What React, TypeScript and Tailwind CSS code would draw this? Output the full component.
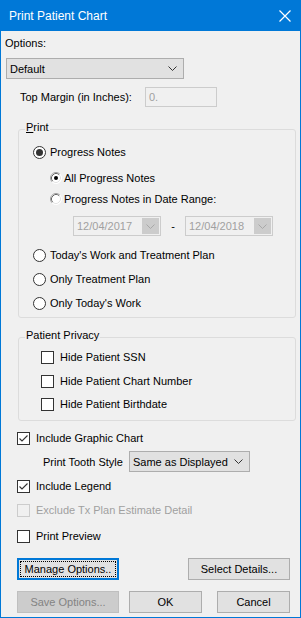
import React from "react";

function Radio({ checked }: { checked?: boolean }) {
  return (
    <svg width="13" height="13" viewBox="0 0 13 13" className="shrink-0">
      <circle cx="6.5" cy="6.5" r="6" fill="#ffffff" stroke="#333333" strokeWidth="1" />
      {checked && <circle cx="6.5" cy="6.5" r="3.5" fill="#333333" />}
    </svg>
  );
}

function ClassicRadio({ checked }: { checked?: boolean }) {
  return (
    <svg width="12" height="12" viewBox="0 0 12 12" className="shrink-0">
      <circle cx="6" cy="6" r="5.5" fill="#ffffff" />
      <path d="M2.11 9.89 A5.5 5.5 0 0 1 9.89 2.11" fill="none" stroke="#a0a0a0" strokeWidth="1" />
      <path d="M2.82 9.18 A4.5 4.5 0 0 1 9.18 2.82" fill="none" stroke="#696969" strokeWidth="1" />
      <path d="M9.89 2.11 A5.5 5.5 0 0 1 2.11 9.89" fill="none" stroke="#ffffff" strokeWidth="1" />
      <path d="M9.18 2.82 A4.5 4.5 0 0 1 2.82 9.18" fill="none" stroke="#e3e3e3" strokeWidth="1" />
      {checked && <circle cx="6" cy="6" r="2" fill="#000000" />}
    </svg>
  );
}

function Check({ checked, disabled }: { checked?: boolean; disabled?: boolean }) {
  return (
    <svg width="13" height="13" viewBox="0 0 13 13" className="shrink-0">
      <rect
        x="0.5"
        y="0.5"
        width="12"
        height="12"
        fill={disabled ? "#f0f0f0" : "#ffffff"}
        stroke={disabled ? "#cccccc" : "#333333"}
        strokeWidth="1"
      />
      {checked && (
        <path d="M2.5 6.5 L5 9 L10.5 3.5" fill="none" stroke="#333333" strokeWidth="1.1" />
      )}
    </svg>
  );
}

function Chevron({ color = "#333333" }: { color?: string }) {
  return (
    <svg width="9" height="5" viewBox="0 0 9 5" className="shrink-0">
      <path d="M0.5 0.5 L4.5 4.5 L8.5 0.5" fill="none" stroke={color} strokeWidth="1" />
    </svg>
  );
}

function DateCombo({ value }: { value: string }) {
  return (
    <div className="w-[88px] h-[20px] border border-[#cccccc] bg-[#f0f0f0] flex items-center justify-between">
      <span className="pl-[3px] text-[#a0a0a0]">{value}</span>
      <div className="w-[17px] h-[16px] mr-[1px] bg-[#cccccc] flex items-center justify-center">
        <Chevron color="#a8a8a8" />
      </div>
    </div>
  );
}

function Button({
  label,
  w,
  focused,
  disabled,
}: {
  label: string;
  w: string;
  focused?: boolean;
  disabled?: boolean;
}) {
  if (focused) {
    return (
      <div className={`${w} h-[22px] border-2 border-[#0078d7] bg-[#e1e1e1] p-[1px]`}>
        <div className="w-full h-full border border-dotted border-black flex items-center justify-center text-black">
          {label}
        </div>
      </div>
    );
  }
  return (
    <div
      className={`${w} h-[22px] border flex items-center justify-center ${
        disabled ? "border-[#bfbfbf] bg-[#cccccc] text-[#838383]" : "border-[#adadad] bg-[#e1e1e1] text-black"
      }`}
    >
      {label}
    </div>
  );
}

export default function App() {
  return (
    <div className="w-[301px] h-[618px] border border-[#0078d7] bg-[#f0f0f0] flex flex-col font-['Liberation_Sans',Arial,sans-serif] text-[11px] leading-[16px] text-black overflow-hidden whitespace-nowrap">
      {/* Title bar */}
      <div className="h-[30px] shrink-0 bg-[#0078d7] flex items-center justify-between pl-[8px] pr-[9px]">
        <span className="text-white text-[12px]">Print Patient Chart</span>
        <svg width="12" height="12" viewBox="0 0 12 12">
          <path d="M0.5 0.5 L11.5 11.5 M11.5 0.5 L0.5 11.5" stroke="#ffffff" strokeWidth="1.2" />
        </svg>
      </div>

      {/* Options */}
      <div className="mt-[4px] pl-[4px] h-[16px]">Options:</div>
      <div className="mt-[7px] ml-[5px] w-[178px] h-[21px] border border-[#adadad] bg-[#e1e1e1] flex items-center justify-between pl-[3px] pr-[6px]">
        <span>Default</span>
        <Chevron />
      </div>

      {/* Top margin */}
      <div className="mt-[8px] ml-[19px] flex items-center h-[20px]">
        <span className="w-[125px]">Top Margin (in Inches):</span>
        <div className="w-[72px] h-[20px] border border-[#cccccc] bg-[#f0f0f0] flex items-center pl-[3px] text-[#a0a0a0]">
          0.
        </div>
      </div>

      {/* Print group */}
      <div className="relative mt-[22px] ml-[17px] w-[278px] border border-[#dcdcdc] rounded-[3px] pt-[12px] pb-[4px]">
        <span className="absolute top-[-11px] left-[6px] px-[1px] bg-[#f0f0f0]">
          <span className="underline">P</span>rint
        </span>
        <div className="h-[20px] flex items-center gap-[4px] ml-[14px]">
          <Radio checked />
          <span>Progress Notes</span>
        </div>
        <div className="mt-[6px] h-[20px] flex items-center gap-[2px] ml-[31px]">
          <ClassicRadio checked />
          <span>All Progress Notes</span>
        </div>
        <div className="mt-[1px] h-[20px] flex items-center gap-[2px] ml-[31px]">
          <ClassicRadio />
          <span>Progress Notes in Date Range:</span>
        </div>
        <div className="mt-[7px] ml-[54px] flex items-center">
          <DateCombo value="12/04/2017" />
          <span className="w-[24px] text-center">-</span>
          <DateCombo value="12/04/2018" />
        </div>
        <div className="mt-[9px] h-[20px] flex items-center gap-[4px] ml-[14px]">
          <Radio />
          <span>Today's Work and Treatment Plan</span>
        </div>
        <div className="mt-[4px] h-[20px] flex items-center gap-[4px] ml-[14px]">
          <Radio />
          <span>Only Treatment Plan</span>
        </div>
        <div className="mt-[4px] h-[20px] flex items-center gap-[4px] ml-[14px]">
          <Radio />
          <span>Only Today's Work</span>
        </div>
      </div>

      {/* Patient Privacy group */}
      <div className="relative mt-[19px] ml-[17px] w-[278px] border border-[#dcdcdc] rounded-[3px] pt-[9px] pb-[6px]">
        <span className="absolute top-[-11px] left-[6px] px-[1px] bg-[#f0f0f0]">Patient Privacy</span>
        <div className="h-[20px] flex items-center gap-[6px] ml-[22px]">
          <Check />
          <span>Hide Patient SSN</span>
        </div>
        <div className="mt-[4px] h-[20px] flex items-center gap-[6px] ml-[22px]">
          <Check />
          <span>Hide Patient Chart Number</span>
        </div>
        <div className="mt-[3px] h-[20px] flex items-center gap-[6px] ml-[22px]">
          <Check />
          <span>Hide Patient Birthdate</span>
        </div>
      </div>

      {/* Bottom checkboxes */}
      <div className="mt-[7px] ml-[16px] h-[20px] flex items-center gap-[6px]">
        <Check checked />
        <span>Include Graphic Chart</span>
      </div>
      <div className="mt-[3px] ml-[42px] h-[21px] flex items-center">
        <span className="w-[86px]">Print Tooth Style</span>
        <div className="w-[121px] h-[21px] border border-[#adadad] bg-[#e1e1e1] flex items-center justify-between pl-[3px] pr-[6px]">
          <span>Same as Displayed</span>
          <Chevron />
        </div>
      </div>
      <div className="mt-[4px] ml-[16px] h-[20px] flex items-center gap-[6px]">
        <Check checked />
        <span>Include Legend</span>
      </div>
      <div className="mt-[4px] ml-[16px] h-[20px] flex items-center gap-[6px]">
        <Check disabled />
        <span className="text-[#a0a0a0]">Exclude Tx Plan Estimate Detail</span>
      </div>
      <div className="mt-[6px] ml-[16px] h-[20px] flex items-center gap-[6px]">
        <Check />
        <span>Print Preview</span>
      </div>

      {/* Buttons */}
      <div className="mt-[12px] ml-[16px] mr-[10px] flex items-center justify-between">
        <Button label="Manage Options.." w="w-[102px]" focused />
        <Button label="Select Details..." w="w-[102px]" />
      </div>
      <div className="mt-[11px] ml-[16px] mr-[10px] flex items-center">
        <Button label="Save Options..." w="w-[102px]" disabled />
        <div className="ml-[10px]">
          <Button label="OK" w="w-[73px]" />
        </div>
        <div className="ml-[15px]">
          <Button label="Cancel" w="w-[73px]" />
        </div>
      </div>
    </div>
  );
}
